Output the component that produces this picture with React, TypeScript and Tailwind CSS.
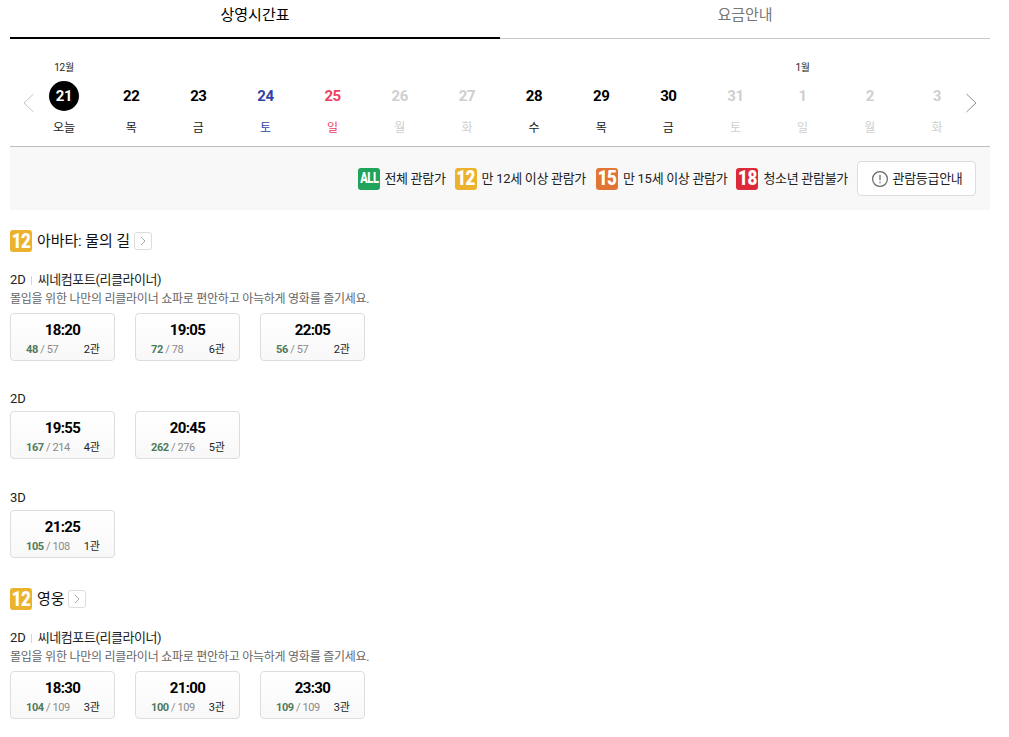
import React from "react";

const FONT = "font-['Roboto','Noto_Sans_CJK_KR',sans-serif]";

type Day = { m?: string; d: string; w: string; c: string; wc: string };
const days: Day[] = [
  { m: "12월", d: "21", w: "오늘", c: "text-white", wc: "text-[#222]" },
  { d: "22", w: "목", c: "text-black", wc: "text-[#222]" },
  { d: "23", w: "금", c: "text-black", wc: "text-[#222]" },
  { d: "24", w: "토", c: "text-[#2f44a5]", wc: "text-[#2f44a5]" },
  { d: "25", w: "일", c: "text-[#f0415f]", wc: "text-[#f0415f]" },
  { d: "26", w: "월", c: "text-[#cfcfcf]", wc: "text-[#cfcfcf]" },
  { d: "27", w: "화", c: "text-[#cfcfcf]", wc: "text-[#cfcfcf]" },
  { d: "28", w: "수", c: "text-black", wc: "text-[#222]" },
  { d: "29", w: "목", c: "text-black", wc: "text-[#222]" },
  { d: "30", w: "금", c: "text-black", wc: "text-[#222]" },
  { d: "31", w: "토", c: "text-[#cfcfcf]", wc: "text-[#cfcfcf]" },
  { m: "1월", d: "1", w: "일", c: "text-[#cfcfcf]", wc: "text-[#cfcfcf]" },
  { d: "2", w: "월", c: "text-[#cfcfcf]", wc: "text-[#cfcfcf]" },
  { d: "3", w: "화", c: "text-[#cfcfcf]", wc: "text-[#cfcfcf]" },
];

function Badge({ t, color }: { t: string; color: string }) {
  return (
    <span className={`w-[22px] h-[22px] ${color} rounded-[3px] flex items-center justify-center shrink-0`}>
      <span
        className={`font-['Roboto',sans-serif] font-black text-white leading-none ${
          t === "ALL" ? "text-[11px] scale-y-[1.3] tracking-[-0.4px]" : "text-[17px] scale-y-[1.22] tracking-[-0.5px]"
        }`}
      >
        {t}
      </span>
    </span>
  );
}

function Legend({ t, color, label, cls, gap }: { t: string; color: string; label: string; cls: string; gap: string }) {
  return (
    <div className={`flex items-center ${cls}`}>
      <Badge t={t} color={color} />
      <span className={`${gap} text-[13px] text-[#222] tracking-[-0.3px] leading-none`}>{label}</span>
    </div>
  );
}

function Card({ time, a, b, hall }: { time: string; a: string; b: string; hall: string }) {
  return (
    <div className="w-[105px] h-[48px] border border-[#dddddd] rounded-[4px] bg-gradient-to-b from-white to-[#f8f8f8] flex flex-col items-center">
      <div className="mt-[7px] text-[15px] leading-[18px] font-bold text-black tracking-[-0.6px]">{time}</div>
      <div className="mt-[4px] w-full pl-[15px] pr-[14px] flex items-center justify-between text-[11px] leading-[14px]">
        <span className="text-[#8a8a8a] tracking-[-0.4px]">
          <b className="text-[#4f7a5c] font-bold">{a}</b> / {b}
        </span>
        <span className="text-[#222]">{hall}</span>
      </div>
    </div>
  );
}

function Format({ fmt, sub, desc, children, cls }: { fmt: string; sub?: string; desc?: string; children: React.ReactNode; cls: string }) {
  return (
    <div className={cls}>
      <div className="flex items-center h-[16px] text-[13px] leading-[16px] text-[#222]">
        <span>{fmt}</span>
        {sub && (
          <>
            <span className="ml-[5px] mr-[6px] w-px h-[9px] bg-[#d5d5d5]" />
            <span className="tracking-[-0.45px]">{sub}</span>
          </>
        )}
      </div>
      {desc && <div className="mt-[4px] h-[15px] text-[12px] leading-[15px] text-[#666] tracking-[-0.25px] whitespace-nowrap">{desc}</div>}
      <div className={`flex gap-[20px] ${desc ? "mt-[6px]" : "mt-[4px]"}`}>{children}</div>
    </div>
  );
}

function Title({ name, cls }: { name: string; cls: string }) {
  return (
    <div className={`flex items-center h-[22px] ${cls}`}>
      <Badge t="12" color="bg-[#ecb22e]" />
      <span className="ml-[5px] text-[15px] leading-none text-[#111] tracking-[-0.1px]">{name}</span>
      <span className="ml-[4px] w-[18px] h-[18px] border border-[#dddddd] rounded-[3px] flex items-center justify-center">
        <svg width="6" height="10" viewBox="0 0 6 10" fill="none" stroke="#a8a8a8" strokeWidth="1">
          <path d="M1 1l4 4-4 4" />
        </svg>
      </span>
    </div>
  );
}

const DESC = "몰입을 위한 나만의 리클라이너 쇼파로 편안하고 아늑하게 영화를 즐기세요.";

export default function App() {
  return (
    <div className={`${FONT} ml-[10px] w-[980px] h-[737px] overflow-hidden bg-white`}>
      <div className="flex h-[39px]">
        <div className="w-1/2 border-b-2 border-black text-center text-[15px] leading-[31px] text-black">상영시간표</div>
        <div className="w-1/2 border-b border-[#c8c8c8] text-center text-[15px] leading-[31px] text-[#777]">요금안내</div>
      </div>

      <div className="relative h-[108px] border-b border-[#bdbdbd]">
        <svg className="absolute left-[13px] top-[54px]" width="11" height="20" viewBox="0 0 11 20" fill="none" stroke="#c4c4c4" strokeWidth="1">
          <path d="M10.5 1L1 10l9.5 9" />
        </svg>
        <svg className="absolute left-[956px] top-[54px]" width="11" height="20" viewBox="0 0 11 20" fill="none" stroke="#8f8f8f" strokeWidth="1">
          <path d="M.5 1L10 10 .5 19" />
        </svg>
        <div className="ml-[20.5px] w-[940px] grid grid-cols-[repeat(14,1fr)]">
          {days.map((x, i) => (
            <div key={i} className="flex flex-col items-center">
              <div className="mt-[22px] h-[14px] text-[10px] leading-[14px] text-[#222] tracking-[-0.3px]">{x.m ?? ""}</div>
              <div className={`mt-[6px] w-[30px] h-[30px] rounded-full flex items-center justify-center text-[15px] font-bold tracking-[-0.4px] ${i === 0 ? "bg-black" : ""} ${x.c}`}>
                {x.d}
              </div>
              <div className={`mt-[10px] text-[12px] leading-[14px] ${x.wc}`}>{x.w}</div>
            </div>
          ))}
        </div>
      </div>

      <div className="h-[63px] bg-[#f8f8f8] flex items-center justify-end pr-[14px]">
        <Legend t="ALL" color="bg-[#20a35a]" label="전체 관람가" cls="mr-[9px]" gap="ml-[4px]" />
        <Legend t="12" color="bg-[#ecb22e]" label="만 12세 이상 관람가" cls="mr-[10px]" gap="ml-[5px]" />
        <Legend t="15" color="bg-[#e17536]" label="만 15세 이상 관람가" cls="mr-[9px]" gap="ml-[5px]" />
        <Legend t="18" color="bg-[#dd2a3a]" label="청소년 관람불가" cls="mr-[9px]" gap="ml-[5px]" />
        <div className="w-[119px] h-[35px] bg-white border border-[#dddddd] rounded-[4px] flex items-center justify-center">
          <svg width="18" height="18" viewBox="0 0 18 18" fill="none" stroke="#666" strokeWidth="1.2">
            <circle cx="9" cy="9" r="7.4" />
            <path d="M9 4.8v5.4M9 11.8v1.4" />
          </svg>
          <span className="ml-[4px] text-[13px] leading-none text-[#222] tracking-[-0.3px]">관람등급안내</span>
        </div>
      </div>

      <Title name="아바타: 물의 길" cls="mt-[20px]" />
      <Format fmt="2D" sub="씨네컴포트(리클라이너)" desc={DESC} cls="mt-[20px]">
        <Card time="18:20" a="48" b="57" hall="2관" />
        <Card time="19:05" a="72" b="78" hall="6관" />
        <Card time="22:05" a="56" b="57" hall="2관" />
      </Format>
      <Format fmt="2D" cls="mt-[30px]">
        <Card time="19:55" a="167" b="214" hall="4관" />
        <Card time="20:45" a="262" b="276" hall="5관" />
      </Format>
      <Format fmt="3D" cls="mt-[31px]">
        <Card time="21:25" a="105" b="108" hall="1관" />
      </Format>

      <Title name="영웅" cls="mt-[30px]" />
      <Format fmt="2D" sub="씨네컴포트(리클라이너)" desc={DESC} cls="mt-[20px]">
        <Card time="18:30" a="104" b="109" hall="3관" />
        <Card time="21:00" a="100" b="109" hall="3관" />
        <Card time="23:30" a="109" b="109" hall="3관" />
      </Format>
    </div>
  );
}
